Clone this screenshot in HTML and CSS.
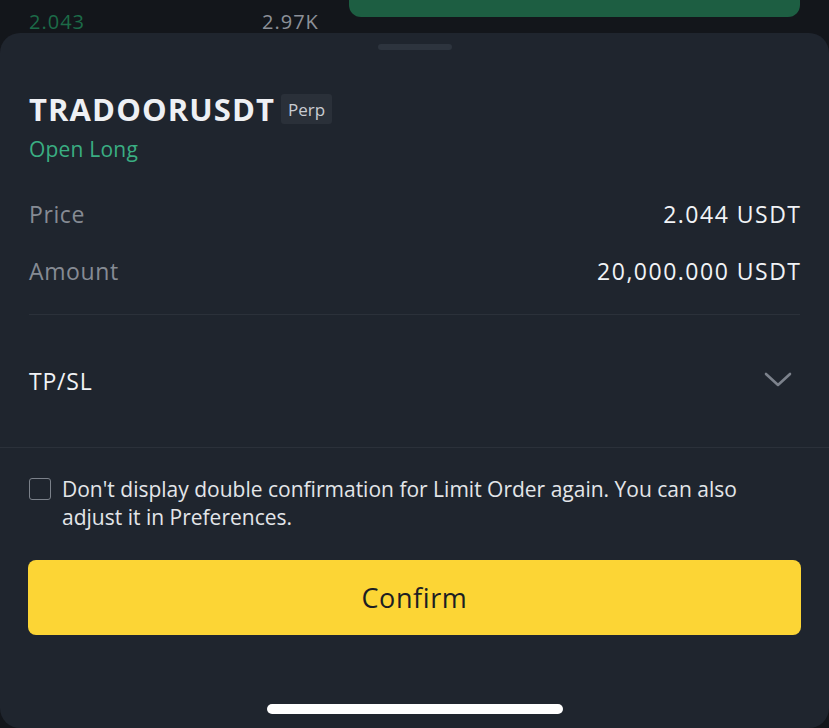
FILE: index.html
```html
<!DOCTYPE html>
<html lang="en">
<head>
<meta charset="utf-8">
<title>Confirm Order</title>
<link rel="stylesheet" href="styles.css">
</head>
<body>
<div class="backdrop">
  <span class="bd-price">2.043</span>
  <span class="bd-qty">2.97K</span>
  <div class="bd-button"></div>
</div>
<div class="sheet">
  <div class="handle"></div>
  <div class="content">
    <div class="title-row">
      <h1 class="symbol">TRADOORUSDT</h1>
      <span class="badge">Perp</span>
    </div>
    <div class="side">Open Long</div>
    <div class="rows">
      <div class="row"><span class="label">Price</span><span class="value">2.044 USDT</span></div>
      <div class="row"><span class="label">Amount</span><span class="value">20,000.000 USDT</span></div>
    </div>
  </div>
  <div class="divider inset"></div>
  <div class="tpsl">
    <span class="tpsl-label">TP/SL</span>
    <svg class="chevron" width="28" height="16" viewBox="0 0 28 16"><path d="M2 2 L14 13 L26 2" fill="none" stroke="#7c828c" stroke-width="2.6" stroke-linecap="round" stroke-linejoin="round"/></svg>
  </div>
  <div class="divider"></div>
  <label class="check">
    <span class="box"></span>
    <span class="check-text">Don't display double confirmation for Limit Order again. You can also adjust it in Preferences.</span>
  </label>
  <div class="btn-wrap"><button class="confirm">Confirm</button></div>
  <div class="home"></div>
</div>
</body>
</html>
```
FILE: styles.css
```css
* { box-sizing: border-box; }
html, body { margin: 0; padding: 0; }
body {
  width: 829px;
  height: 728px;
  overflow: hidden;
  background: #13161b;
  font-family: "Open Sans", Lato, sans-serif;
  color: #eceef1;
}
.backdrop {
  height: 33px;
  display: flex;
  align-items: flex-start;
  padding-left: 29px;
}
.bd-price {
  width: 233px;
  font-size: 20px;
  line-height: 21px;
  margin-top: 11px;
  letter-spacing: 1px;
  color: #1c6b48;
}
.bd-qty {
  width: 87px;
  font-size: 20px;
  line-height: 21px;
  margin-top: 11px;
  letter-spacing: 1px;
  color: #8c9098;
}
.bd-button {
  width: 451px;
  height: 17px;
  background: #1d5e42;
  border-radius: 0 0 12px 12px;
}
.sheet {
  height: 695px;
  background: #1f252e;
  border-radius: 20px;
  display: flex;
  flex-direction: column;
}
.handle {
  width: 74px;
  height: 6px;
  border-radius: 3px;
  background: #2d343e;
  margin: 11px auto 0;
}
.content { padding: 0 29px; }
.title-row {
  display: flex;
  align-items: center;
  gap: 6px;
  margin-top: 41px;
}
.symbol {
  margin: 0;
  font-size: 31px;
  line-height: 36px;
  font-weight: 700;
  letter-spacing: 1.1px;
  color: #eef0f4;
}
.badge {
  height: 30px;
  padding: 0 7px;
  display: flex;
  align-items: center;
  background: #2a3039;
  border-radius: 3px;
  font-size: 17px;
  color: #c9ccd2;
}
.side {
  margin-top: 10px;
  font-size: 21px;
  line-height: 24px;
  letter-spacing: 0.2px;
  color: #3aae82;
}
.rows {
  margin-top: 39px;
  display: flex;
  flex-direction: column;
  gap: 29px;
}
.row {
  display: flex;
  justify-content: space-between;
  font-size: 23px;
  line-height: 28px;
}
.label { color: #868b94; letter-spacing: 0.6px; }
.value { color: #f1f3f6; font-weight: 500; letter-spacing: 1.5px; margin-right: -1.5px; }
.divider {
  height: 1px;
  background: #2b313a;
}
.divider.inset { margin: 29px 29px 0; }
.tpsl {
  height: 132px;
  padding: 0 37px 0 29px;
  display: flex;
  align-items: center;
  justify-content: space-between;
  font-size: 23px;
  font-weight: 500;
  letter-spacing: 0.8px;
  color: #f1f3f6;
}
.chevron { margin-bottom: 2px; }
.check {
  display: flex;
  align-items: flex-start;
  gap: 11px;
  padding: 27px 29px 0;
  font-size: 21px;
  line-height: 28px;
  color: #e3e5e9;
}
.box {
  flex: none;
  width: 22px;
  height: 22px;
  margin-top: 3px;
  border: 1.5px solid #7b818a;
  border-radius: 3px;
}
.btn-wrap { padding: 29px 28px 0; }
.confirm {
  display: block;
  width: 100%;
  height: 75px;
  border: none;
  border-radius: 8px;
  background: #fcd535;
  color: #1c1e23;
  font-family: "Open Sans", Lato, sans-serif;
  font-size: 27px;
  font-weight: 500;
  letter-spacing: 0.6px;
}
.home {
  width: 296px;
  height: 10px;
  border-radius: 5px;
  background: #ffffff;
  margin: 69px auto 0;
}
```
